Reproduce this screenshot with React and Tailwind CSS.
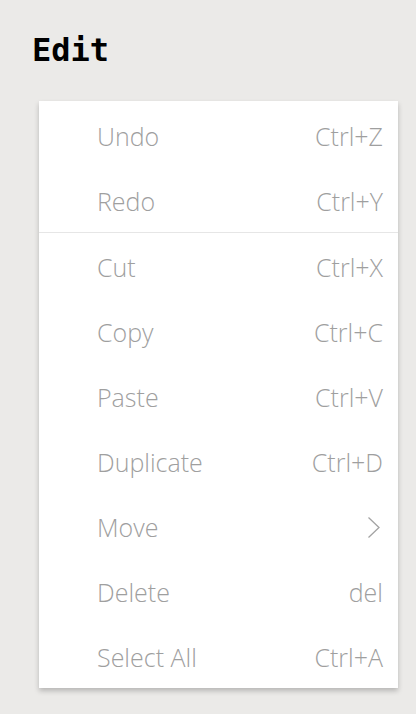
const ITEMS_TOP = [
  { label: 'Undo', hint: 'Ctrl+Z' },
  { label: 'Redo', hint: 'Ctrl+Y' },
];

const ITEMS_BOTTOM = [
  { label: 'Cut', hint: 'Ctrl+X' },
  { label: 'Copy', hint: 'Ctrl+C' },
  { label: 'Paste', hint: 'Ctrl+V' },
  { label: 'Duplicate', hint: 'Ctrl+D' },
  { label: 'Move', submenu: true },
  { label: 'Delete', hint: 'del' },
  { label: 'Select All', hint: 'Ctrl+A' },
];

const Chevron = () => (
  <svg width="14" height="23" viewBox="0 0 14 23" fill="none" className="mr-[2px]">
    <polyline points="1.5,1.5 12,11.5 1.5,21.5" stroke="#a3a3a3" strokeWidth="1.3" />
  </svg>
);

const MenuRow = ({ item }) => (
  <div className="flex h-[65px] items-center justify-between pl-[58px] pr-[15px] pt-[3px] leading-[40px]">
    <span>{item.label}</span>
    {item.submenu ? <Chevron /> : <span>{item.hint}</span>}
  </div>
);

export default function App() {
  return (
    <div className="min-h-screen bg-[#ebeae8]">
      <h1 className="pl-[32px] pt-[30px] font-['DejaVu_Sans_Mono',monospace] text-[32px] font-bold leading-[40px] text-black">
        Edit
      </h1>
      <div className="ml-[39px] mt-[31px] w-[359px] bg-white font-['Open_Sans',sans-serif] text-[25px] font-light text-[#9f9f9f] shadow-[0_3px_5px_rgba(0,0,0,0.22)]">
        <div className="pt-[1px]">
          {ITEMS_TOP.map((item) => (
            <MenuRow key={item.label} item={item} />
          ))}
        </div>
        <div className="h-px bg-[#e6e6e6]" />
        <div>
          {ITEMS_BOTTOM.map((item) => (
            <MenuRow key={item.label} item={item} />
          ))}
        </div>
      </div>
    </div>
  );
}
